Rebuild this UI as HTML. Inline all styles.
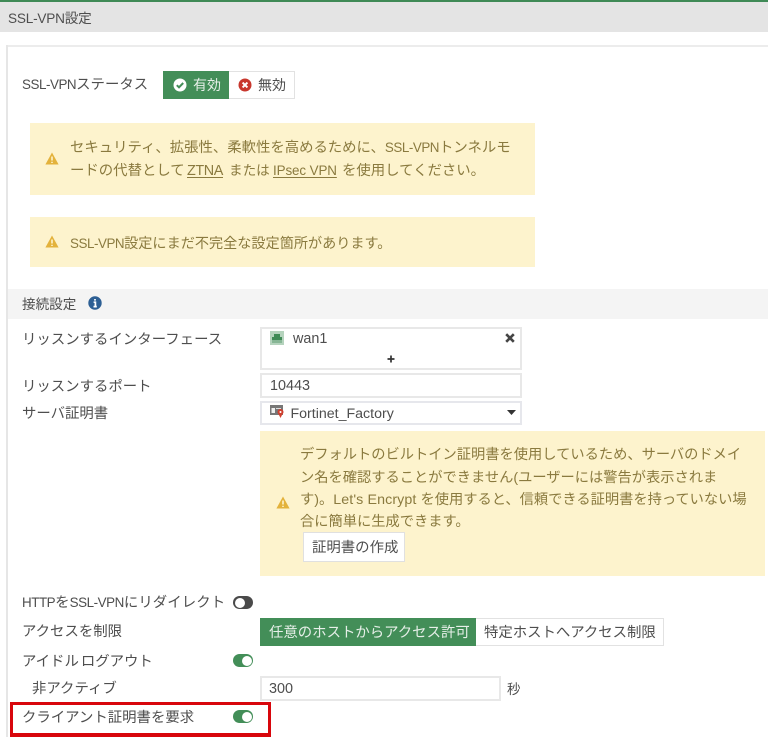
<!DOCTYPE html>
<html lang="ja"><head><meta charset="utf-8">
<style>
html,body{margin:0;padding:0;background:#fff}
#p{position:relative;width:768px;height:737px;overflow:hidden;background:#fff;font-family:"Liberation Sans","Noto Sans CJK JP",sans-serif;font-size:14.4px;color:#4e4e4e;filter:blur(.3px)}
#p div{position:absolute;box-sizing:border-box}
.t{white-space:nowrap;line-height:20px;height:20px}
.y{background:#fdf3cd}
.w{color:#8a7a3f}
.w u{text-underline-offset:2px}
.i{border:2px solid #e8e8e8;background:#fff}
.s{font-size:13.4px;letter-spacing:-.45px}
.m{font-size:14.25px}
svg{position:absolute}
</style></head><body>
<div id="p">
<div style="left:0;top:0;width:768px;height:2.5px;background:#3f8a56"></div>
<div style="left:0;top:2px;width:768px;height:30px;background:#e4e4e4"></div>
<div class="t" style="left:8px;top:9px;font-size:13.6px;letter-spacing:-.2px">SSL-VPN設定</div>
<div style="left:6px;top:45px;width:762px;height:2px;background:#ececec"></div>
<div style="left:6px;top:45px;width:2px;height:692px;background:#e6e6e6"></div>

<div class="t" style="left:22px;top:75px"><span class="s">SSL-VPN</span>ステータス</div>
<div style="left:163px;top:71px;width:66px;height:28px;background:#438e58"></div>
<div style="left:229px;top:71px;width:66px;height:28px;border:1px solid #e2e2e2;border-left:0"></div>
<svg style="left:173px;top:78px" width="14" height="14" viewBox="0 0 14 14"><circle cx="7" cy="7" r="6.5" fill="#fff"/><path d="M3.8 7.2 6 9.3 10.2 5" fill="none" stroke="#438e58" stroke-width="2"/></svg>
<div class="t" style="left:193px;top:75px;color:#e6efe8;font-size:14px">有効</div>
<svg style="left:238px;top:78px" width="14" height="14" viewBox="0 0 14 14"><circle cx="7" cy="7" r="6.5" fill="#c8372d"/><path d="M4.6 4.6 9.4 9.4M9.4 4.6 4.6 9.4" fill="none" stroke="#fff" stroke-width="2"/></svg>
<div class="t" style="left:258px;top:75px;font-size:14px">無効</div>

<div class="y" style="left:30px;top:123px;width:505px;height:72px"></div>
<svg style="left:45px;top:152px" width="14" height="13" viewBox="0 0 14 13"><path d="M7 .5 13.6 12.5H.4Z" fill="#e3b23c"/><path d="M7 4.5V8.5M7 9.8V11" stroke="#fdf3cd" stroke-width="1.6"/></svg>
<div class="t w" style="left:70px;top:138px;letter-spacing:-.02px">セキュリティ、拡張性、柔軟性を高めるために、<span class="s">SSL-VPN</span>トンネルモ</div>
<div class="t w" style="left:70px;top:161px">ードの代替として</div>
<div class="t w" style="left:187px;top:161px;letter-spacing:-.4px"><u>ZTNA </u></div>
<div class="t w" style="left:229px;top:161px;font-size:13.6px">または</div>
<div class="t w" style="left:273px;top:161px;font-size:13.4px;letter-spacing:-.1px"><u>IPsec VPN </u></div>
<div class="t w" style="left:342px;top:161px">を使用してください。</div>

<div class="y" style="left:30px;top:217px;width:505px;height:50px"></div>
<svg style="left:45px;top:235px" width="14" height="13" viewBox="0 0 14 13"><path d="M7 .5 13.6 12.5H.4Z" fill="#e3b23c"/><path d="M7 4.5V8.5M7 9.8V11" stroke="#fdf3cd" stroke-width="1.6"/></svg>
<div class="t w" style="left:70px;top:232.5px;font-size:14.15px"><span class="s">SSL-VPN</span>設定にまだ不完全な設定箇所があります。</div>

<div style="left:8px;top:289px;width:760px;height:30px;background:#f4f4f4"></div>
<div class="t" style="left:22px;top:295px;font-size:13.6px">接続設定</div>
<svg style="left:88px;top:296px" width="14" height="14" viewBox="0 0 14 14"><circle cx="7" cy="7" r="6.7" fill="#2d5f94"/><path d="M7 3V4.6M5.6 6.2H7.4V10.2M5.5 10.6H8.8" fill="none" stroke="#fff" stroke-width="1.7"/></svg>

<div class="t" style="left:22px;top:330px;letter-spacing:.02px">リッスンするインターフェース</div>
<div class="i" style="left:260px;top:327px;width:262px;height:43px"></div>
<svg style="left:270px;top:331px" width="14" height="14" viewBox="0 0 14 14"><rect width="14" height="14" fill="#b5d3bd"/><rect x="2" y="6" width="10" height="6" fill="#3f8a56"/><rect x="4" y="3" width="6" height="3" fill="#3f8a56"/><path d="M3 9V12M5 9V12M7 9V12M9 9V12M11 9V12" stroke="#cfe3d4"/></svg>
<div class="t" style="left:293px;top:329px">wan1</div>
<svg style="left:505px;top:333px" width="10" height="10" viewBox="0 0 10 10"><path d="M1.2 1.2 8.8 8.8M8.8 1.2 1.2 8.8" stroke="#454545" stroke-width="2.6"/></svg>
<svg style="left:387px;top:355px" width="8" height="8" viewBox="0 0 8 8"><path d="M4 .5V7.5M.5 4H7.5" stroke="#333" stroke-width="1.7"/></svg>

<div class="t" style="left:22px;top:376.5px">リッスンするポート</div>
<div class="i" style="left:260px;top:373px;width:262px;height:25px"></div>
<div class="t" style="left:270px;top:376px">10443</div>

<div class="t" style="left:22px;top:403.5px">サーバ証明書</div>
<div class="i" style="left:260px;top:401px;width:262px;height:24px;border-color:#e6e7ec"></div>
<svg style="left:270px;top:405px" width="15" height="13" viewBox="0 0 15 13"><rect x="0" y="0" width="13" height="10" fill="#777"/><rect x="1.5" y="3" width="3.5" height="5" fill="#eee"/><rect x="6" y="3" width="5" height="1" fill="#ddd"/><circle cx="10.5" cy="7" r="3" fill="#d0402f"/><path d="M8.5 9 10.5 13 12.5 9Z" fill="#d0402f"/><circle cx="10.5" cy="7" r="1" fill="#fff"/></svg>
<div class="t" style="left:290.5px;top:404px;font-size:14.2px">Fortinet_Factory</div>
<svg style="left:507px;top:410px" width="9" height="5" viewBox="0 0 9 5"><path d="M0 0H9L4.5 5Z" fill="#333"/></svg>

<div class="y" style="left:260px;top:431px;width:505px;height:145px"></div>
<svg style="left:276px;top:496px" width="14" height="13" viewBox="0 0 14 13"><path d="M7 .5 13.6 12.5H.4Z" fill="#e3b23c"/><path d="M7 4.5V8.5M7 9.8V11" stroke="#fdf3cd" stroke-width="1.6"/></svg>
<div class="t w m" style="left:300px;top:444.5px">デフォルトのビルトイン証明書を使用しているため、サーバのドメイ</div>
<div class="t w m" style="left:300px;top:467.5px">ン名を確認することができません(ユーザーには警告が表示されま</div>
<div class="t w m" style="left:300px;top:489.5px">す)。<span style="letter-spacing:.1px">Let's Encrypt</span> を使用すると、信頼できる証明書を持っていない場</div>
<div class="t w m" style="left:300px;top:511.5px">合に簡単に生成できます。</div>
<div style="left:303px;top:532px;width:102px;height:30px;background:#fff;border:1px solid #e0e0e0"></div>
<div class="t" style="left:312px;top:537.5px">証明書の作成</div>

<div class="t" style="left:22px;top:593px;letter-spacing:.1px"><span class="s">HTTP</span>を<span class="s">SSL-VPN</span>にリダイレクト</div>
<div style="left:233px;top:596px;width:20px;height:13px;border-radius:7px;background:#4a4a4a"></div>
<div style="left:234.5px;top:597.5px;width:10px;height:10px;border-radius:50%;background:#fff"></div>

<div class="t" style="left:22px;top:621.5px">アクセスを制限</div>
<div style="left:260px;top:618px;width:216px;height:28px;background:#438e58"></div>
<div class="t" style="left:269px;top:623px;color:#e6efe8">任意のホストからアクセス許可</div>
<div style="left:476px;top:618px;width:188px;height:28px;border:1px solid #e2e2e2;border-left:0"></div>
<div class="t" style="left:484px;top:623px;letter-spacing:-.02px">特定ホストへアクセス制限</div>

<div class="t" style="left:22px;top:651.5px">アイドル<span style="letter-spacing:-2px"> </span>ログアウト</div>
<div style="left:233px;top:654px;width:20px;height:13px;border-radius:7px;background:#438e58"></div>
<div style="left:241.5px;top:655.5px;width:10px;height:10px;border-radius:50%;background:#fff"></div>

<div class="t" style="left:32px;top:679px">非アクティブ</div>
<div class="i" style="left:260px;top:676px;width:241px;height:25px"></div>
<div class="t" style="left:269px;top:679px">300</div>
<div class="t" style="left:507px;top:680px;font-size:13.5px">秒</div>

<div class="t" style="left:22px;top:708px">クライアント証明書を要求</div>
<div style="left:233px;top:710px;width:20px;height:13px;border-radius:7px;background:#438e58"></div>
<div style="left:241.5px;top:711.5px;width:10px;height:10px;border-radius:50%;background:#fff"></div>

<div style="left:10px;top:702px;width:261px;height:35px;border:3px solid #d8060c;border-bottom-width:4px"></div>
</div>
</body></html>
